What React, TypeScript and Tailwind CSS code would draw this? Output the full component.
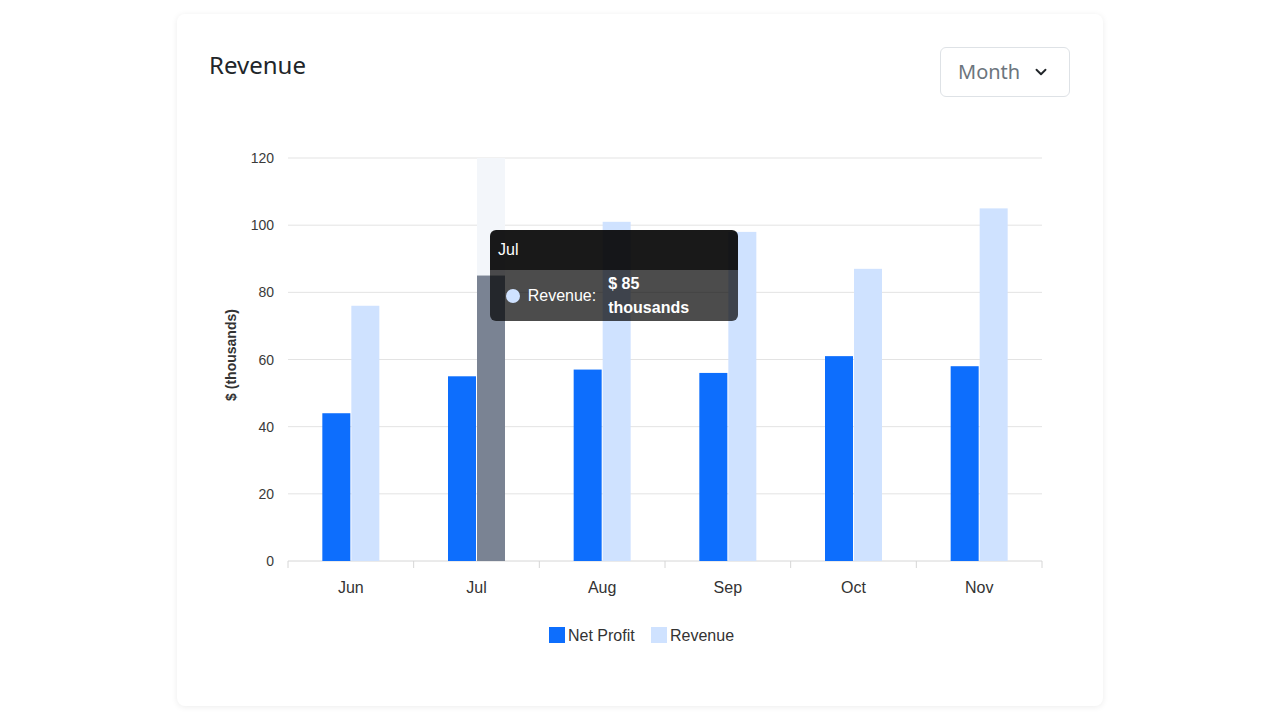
import { ChevronDown } from 'lucide-react';

const months = ['Jun', 'Jul', 'Aug', 'Sep', 'Oct', 'Nov'];
const netProfit = [44, 55, 57, 56, 61, 58];
const revenue = [76, 85, 101, 98, 87, 105];
const ticks = [0, 20, 40, 60, 80, 100, 120];

// chart geometry in svg coords
const OX = 209;
const OY = 110;
const left = 288 - OX;
const right = 1042 - OX;
const bottom = 561 - OY;
const top = 158 - OY;
const band = (right - left) / months.length;
const yOf = (v: number) => bottom - (v * (bottom - top)) / 120;

function RevenueChart() {
  const hovered = 1;
  return (
    <div className="relative mt-[13px]">
      <svg width={862} height={560} className="block" style={{ fontFamily: '"Liberation Sans", Arial, sans-serif' }}>
        {ticks.map((t) => (
          <g key={t}>
            <line x1={left} x2={right} y1={yOf(t)} y2={yOf(t)} stroke={t === 0 ? '#d6d6d6' : '#e3e3e3'} strokeWidth={1} />
            <text x={274 - OX} y={yOf(t) + 5} textAnchor="end" fontSize={14} fill="#3a3a3a">
              {t}
            </text>
          </g>
        ))}
        {months.map((_, i) => (
          <line key={i} x1={left + band * i} x2={left + band * i} y1={bottom} y2={bottom + 7} stroke="#d6d6d6" />
        ))}
        <line x1={right} x2={right} y1={bottom} y2={bottom + 7} stroke="#d6d6d6" />
        <text
          transform={`translate(${236 - OX}, ${355 - OY}) rotate(-90)`}
          textAnchor="middle"
          fontSize={14}
          fontWeight={700}
          fill="#333"
        >
          $ (thousands)
        </text>
        {months.map((m, i) => {
          const c = left + band * (i + 0.5);
          return (
            <g key={m}>
              {i === hovered && (
                <rect x={c + 0.5} y={top} width={28} height={bottom - top} fill="#f3f6fa" />
              )}
              <rect x={c - 28.5} y={yOf(netProfit[i])} width={28} height={bottom - yOf(netProfit[i])} fill="#0d6efd" />
              <rect
                x={c + 0.5}
                y={yOf(revenue[i])}
                width={28}
                height={bottom - yOf(revenue[i])}
                fill={i === hovered ? '#7a8393' : '#cfe2ff'}
              />
              <text x={c} y={593 - OY} textAnchor="middle" fontSize={16} fill="#333">
                {m}
              </text>
            </g>
          );
        })}
        <rect x={549 - OX} y={627 - OY} width={16} height={16} fill="#0d6efd" />
        <text x={568 - OX} y={641 - OY} fontSize={16} fill="#333">
          Net Profit
        </text>
        <rect x={651 - OX} y={627 - OY} width={16} height={16} fill="#cfe2ff" />
        <text x={670 - OX} y={641 - OY} fontSize={16} fill="#333">
          Revenue
        </text>
      </svg>

      <div className="absolute left-[281px] top-[120px] w-[248px] overflow-hidden rounded-md font-['Liberation_Sans',Arial,sans-serif] text-white">
        <div className="flex h-10 items-center bg-black/90 px-2 text-[16px]">Jul</div>
        <div className="flex h-[51px] items-center gap-2 bg-black/70 px-4 text-[16px]">
          <span className="h-[14px] w-[14px] rounded-full bg-[#cfe2ff]" />
          <span>Revenue:</span>
          <span className="ml-1 font-bold">$ 85 thousands</span>
        </div>
      </div>
    </div>
  );
}

export default function App() {
  return (
    <div className="flex min-h-[720px] justify-center bg-white pt-[14px]">
      <section className="h-[692px] w-[926px] rounded-lg bg-white px-8 pt-8 shadow-[0_1px_6px_rgba(0,0,0,0.08)]">
        <div className="flex items-start justify-between">
          <h2 className="mt-[3px] font-['Noto_Sans',sans-serif] text-[24px] leading-8 text-[#212529]">Revenue</h2>
          <button className="mr-[1px] mt-[1px] flex h-[50px] w-[130px] items-center justify-between rounded-md border border-[#dee2e6] pl-[17px] pr-[19px] font-['Noto_Sans',sans-serif] text-[20px] text-[#6c757d]">
            Month
            <ChevronDown className="h-[18px] w-[18px] text-[#212529]" strokeWidth={2.5} />
          </button>
        </div>
        <RevenueChart />
      </section>
    </div>
  );
}
